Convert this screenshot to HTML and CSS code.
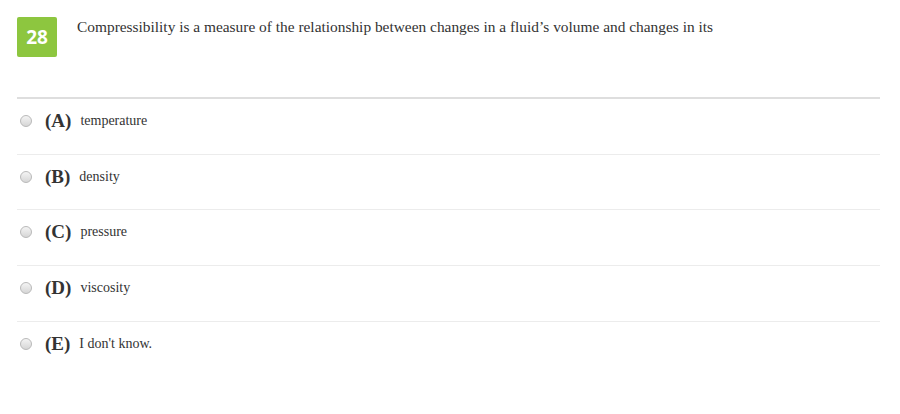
FILE: index.html
```html
<!DOCTYPE html>
<html>
<head>
<meta charset="utf-8">
<link rel="stylesheet" href="styles.css">
</head>
<body>
<div class="question">
  <div class="q-head">
    <div class="badge">28</div>
    <div class="q-text">Compressibility is a measure of the relationship between changes in a fluid’s volume and changes in its</div>
  </div>
  <ul class="options">
    <li class="option"><span class="radio"></span><span class="letter">(A)</span><span class="answer">temperature</span></li>
    <li class="option"><span class="radio"></span><span class="letter">(B)</span><span class="answer">density</span></li>
    <li class="option"><span class="radio"></span><span class="letter">(C)</span><span class="answer">pressure</span></li>
    <li class="option"><span class="radio"></span><span class="letter">(D)</span><span class="answer">viscosity</span></li>
    <li class="option"><span class="radio"></span><span class="letter">(E)</span><span class="answer">I don't know.</span></li>
  </ul>
</div>
</body>
</html>
```
FILE: styles.css
```css
html, body {
  margin: 0;
  padding: 0;
  background: #fff;
}
body {
  font-family: "Liberation Serif", "Times New Roman", serif;
  color: #333;
}
.question {
  padding: 17px 20px 0 17px;
}
.q-head {
  display: flex;
  align-items: flex-start;
  gap: 20px;
  padding-bottom: 40px;
  border-bottom: 2px solid #dedede;
}
.badge {
  flex: 0 0 40px;
  width: 40px;
  height: 40px;
  background: #8dc63f;
  border-radius: 2px;
  color: #fff;
  font-family: "Open Sans", sans-serif;
  font-weight: 700;
  font-size: 19px;
  line-height: 40px;
  text-align: center;
}
.q-text {
  font-size: 15.4px;
  line-height: 20px;
}
.options {
  list-style: none;
  margin: 0;
  padding: 0;
}
.option {
  display: flex;
  align-items: center;
  height: 20px;
  padding: 12px 0 22.7px 3px;
  border-bottom: 1px solid #ececec;
}
.option:last-child {
  border-bottom: none;
}
.radio {
  width: 10px;
  height: 10px;
  border: 1px solid #b9b9b9;
  border-radius: 50%;
  background: linear-gradient(#f4f4f4, #d6d6d6);
  margin-right: 13px;
  flex: 0 0 auto;
}
.letter {
  font-weight: 700;
  font-size: 19px;
  margin-right: 9px;
}
.answer {
  font-size: 14px;
}
```
